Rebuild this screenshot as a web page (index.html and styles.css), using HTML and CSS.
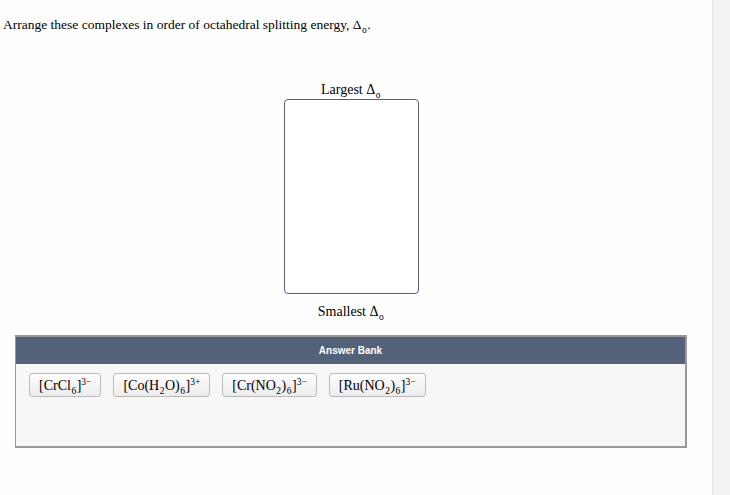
FILE: index.html
```html
<!DOCTYPE html>
<html lang="en">
<head>
    <meta charset="UTF-8">
    <meta name="viewport" content="width=device-width, initial-scale=1.0">
    <title>Octahedral Splitting Energy</title>
    <link rel="stylesheet" href="styles.css">
</head>
<body>
    <div class="page">
        <div class="question">
            <p class="prompt">Arrange these complexes in order of octahedral splitting energy, &Delta;<sub>o</sub>.</p>

            <div class="ranking">
                <div class="rank-label">Largest &Delta;<sub>o</sub></div>
                <div class="dropzone"></div>
                <div class="rank-label">Smallest &Delta;<sub>o</sub></div>
            </div>

            <div class="bank">
                <div class="bank-header">Answer Bank</div>
                <div class="bank-body">
                    <div class="tile">[CrCl<sub>6</sub>]<sup>3&minus;</sup></div>
                    <div class="tile">[Co(H<sub>2</sub>O)<sub>6</sub>]<sup>3+</sup></div>
                    <div class="tile">[Cr(NO<sub>2</sub>)<sub>6</sub>]<sup>3&minus;</sup></div>
                    <div class="tile">[Ru(NO<sub>2</sub>)<sub>6</sub>]<sup>3&minus;</sup></div>
                </div>
            </div>
        </div>
        <div class="sidebar"></div>
    </div>
</body>
</html>
```

FILE: styles.css
```css
body {
    margin: 0;
    background-color: #fefefe;
    font-family: "Liberation Serif", "Times New Roman", serif;
    color: #000;
}

.page {
    display: flex;
    height: 495px;
}

.question {
    flex: 1;
    padding: 0 25px 0 15px;
}

.prompt {
    margin: 17px 0 0 -12px;
    font-size: 13.5px;
}

sub, sup {
    font-size: 9.5px;
    line-height: 0;
}

sub {
    vertical-align: -4px;
    margin: 0 0.5px;
}

sup {
    vertical-align: 5px;
}

.ranking {
    display: flex;
    flex-direction: column;
    align-items: center;
    margin-top: 47px;
}

.rank-label {
    font-size: 14px;
    line-height: 20px;
}

.dropzone {
    width: 133px;
    height: 193px;
    margin: -1px 0 8px;
    border: 1px solid #536279;
    border-radius: 4px;
    background-color: #fff;
}

.bank {
    margin-top: 13px;
    border: 2px solid #999;
    border-left-width: 1px;
    background-color: #f7f7f7;
}

.bank-header {
    height: 27px;
    line-height: 28px;
    background-color: #536279;
    color: #fff;
    text-align: center;
    font-family: "Liberation Sans", Arial, sans-serif;
    font-size: 10px;
    font-weight: bold;
}

.bank-body {
    display: flex;
    gap: 12px;
    height: 82px;
    box-sizing: border-box;
    padding: 9px 13px 0;
    align-items: flex-start;
}

.tile {
    height: 22px;
    line-height: 23px;
    padding: 0 9px;
    border: 1px solid #bbb;
    border-radius: 3px;
    background: linear-gradient(#fdfdfd, #ececec);
    font-size: 14px;
}

.sidebar {
    width: 17px;
    border-left: 1px solid #e2e2e2;
    background-color: #f2f2f2;
}
```
